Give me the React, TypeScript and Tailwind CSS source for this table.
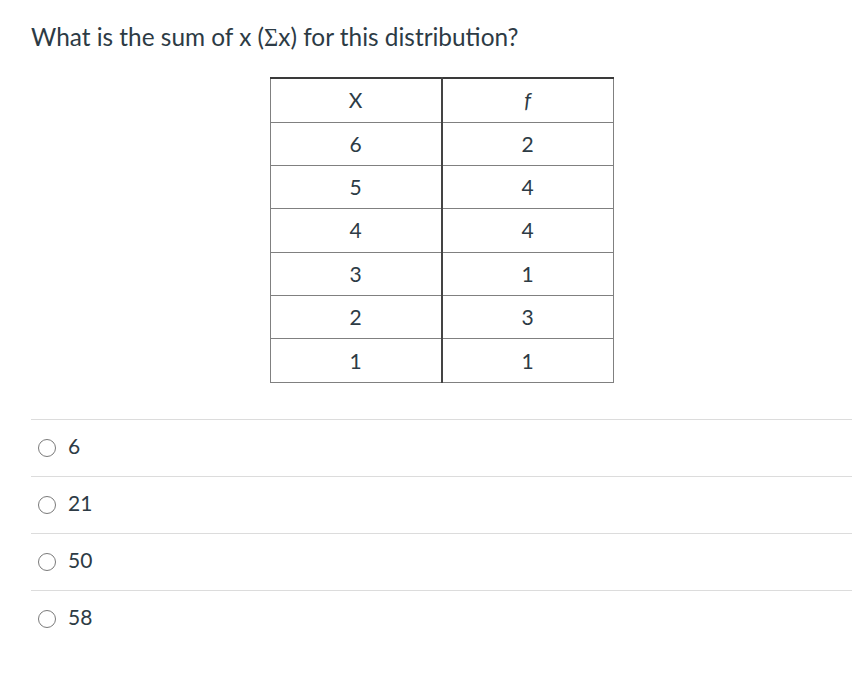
const rows: [string, string, boolean][] = [
  ['6', '2', false],
  ['5', '4', true],
  ['4', '4', false],
  ['3', '1', true],
  ['2', '3', false],
  ['1', '1', true],
]

const answers = ['6', '21', '50', '58']

export default function App(): React.JSX.Element {
  return (
    <div className="min-h-screen bg-white pl-[31px] pr-[13px] pt-[22px] text-[#2d3b45] font-['Lato','Open_Sans',sans-serif]">
      <p className="text-[24.4px] leading-[30px]">
        What is the sum of x (<span className="font-['Liberation_Serif',serif]">Σ</span>x) for this distribution?
      </p>

      <table className="mx-auto mt-[24px] w-[344px] table-fixed border-collapse text-[21px] leading-[28px] text-center">
        <thead>
          <tr className="h-[44px] border-t-2 border-t-[#3a3a3a]">
            <th className="w-1/2 font-normal border border-[#808080] border-r-[#444] border-r-2">X</th>
            <th className="w-1/2 font-normal italic border border-[#808080]">f</th>
          </tr>
        </thead>
        <tbody>
          {rows.map(([x, f, dark], i) => (
            <tr key={i} className="h-[43.4px]">
              <td className={`border border-[#808080] border-r-2 border-r-[#444] ${dark ? 'border-t-[#3a3a3a]' : ''}`}>{x}</td>
              <td className={`border border-[#808080] ${dark ? 'border-t-[#3a3a3a]' : ''}`}>{f}</td>
            </tr>
          ))}
        </tbody>
      </table>

      <div className="mt-[36px]">
        {answers.map((a) => (
          <div key={a} className="h-[57px] flex items-center border-t border-[#dcdcdc]">
            <span className="ml-[7px] w-[18px] h-[18px] rounded-full border-[1.5px] border-[#7a7a7a]" />
            <span className="ml-[12px] mb-[4px] text-[21px] leading-[28px]">{a}</span>
          </div>
        ))}
      </div>
    </div>
  )
}
